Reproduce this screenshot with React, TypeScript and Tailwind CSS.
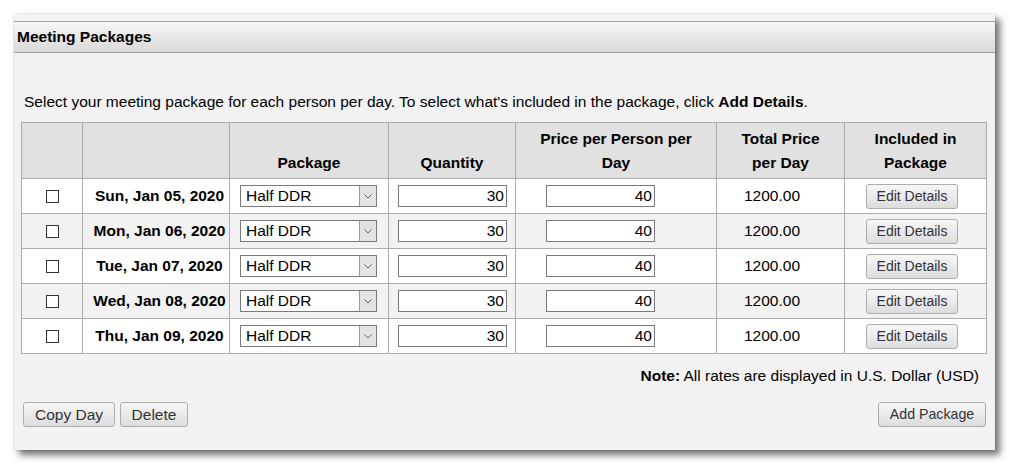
import React from "react";

const rows = [
  "Sun, Jan 05, 2020",
  "Mon, Jan 06, 2020",
  "Tue, Jan 07, 2020",
  "Wed, Jan 08, 2020",
  "Thu, Jan 09, 2020",
];

const cell = "border-r border-b border-[#acacac] flex items-center";
const hcell = "border-r border-b border-[#acacac] bg-[#e1e1e1] flex items-end justify-center text-center font-bold leading-[24px] pb-[3px]";

function Btn({ children, className = "" }: { children: React.ReactNode; className?: string }) {
  return (
    <button
      className={
        "h-[25px] rounded-[3px] border border-[#adadad] bg-gradient-to-b from-[#f7f7f7] to-[#dddddd] text-[#333] flex items-center justify-center " +
        className
      }
    >
      {children}
    </button>
  );
}

export default function App() {
  return (
    <div
      className="w-[1010px] h-[466px] bg-white pt-[14px] pl-[14px] text-black"
      style={{ fontFamily: '"Liberation Sans", Arial, sans-serif' }}
    >
      <div className="w-[981px] h-[436px] bg-[#f2f2f2] shadow-[0_0_2px_rgba(0,0,0,0.2),5px_5px_7px_rgba(0,0,0,0.55)] flex flex-col">
        <div className="h-[7px] bg-[#f4f4f4]" />
        <div className="h-[32px] border-t border-b border-[#a2a2a2] bg-gradient-to-b from-[#f7f7f7] to-[#d9d9d9] flex items-center pl-[3px]">
          <span className="text-[15.5px] font-bold">Meeting Packages</span>
        </div>
        <div className="pl-[7px] pr-[8px] flex flex-col text-[15.5px]">
          <div className="mt-[40px] pl-[3px] leading-[18px]">
            Select your meeting package for each person per day. To select what's included in the package, click{" "}
            <b>Add Details</b>.
          </div>
          <div className="mt-[11px] grid grid-cols-[61px_147px_159px_127px_201px_128px_142px] w-[966px] border-l border-t border-[#acacac]">
            <div className={hcell + " h-[56px]"}></div>
            <div className={hcell}></div>
            <div className={hcell}>Package</div>
            <div className={hcell}>Quantity</div>
            <div className={hcell}>
              Price per Person per
              <br />
              Day
            </div>
            <div className={hcell}>
              Total Price
              <br />
              per Day
            </div>
            <div className={hcell}>
              Included in
              <br />
              Package
            </div>
            {rows.map((d, i) => {
              const bg = i % 2 === 0 ? "bg-white" : "bg-[#f2f2f2]";
              return (
                <React.Fragment key={d}>
                  <div className={cell + " " + bg + " h-[35px] justify-center"}>
                    <div className="w-[13px] h-[13px] border border-[#333] bg-white" />
                  </div>
                  <div className={cell + " " + bg + " justify-center pl-[7px] font-bold whitespace-nowrap"}>{d}</div>
                  <div className={cell + " " + bg + " pl-[10px]"}>
                    <div className="w-[137px] h-[22px] border border-[#7a7a7a] bg-white flex items-stretch">
                      <span className="flex-1 pl-[5px] leading-[20px]">Half DDR</span>
                      <span className="w-[17px] border-l border-[#9a9a9a] bg-[#e3e3e3] flex items-center justify-center">
                        <svg width="8" height="5" viewBox="0 0 8 5">
                          <path d="M0.5 0.5 L4 4 L7.5 0.5" fill="none" stroke="#606060" strokeWidth="1" />
                        </svg>
                      </span>
                    </div>
                  </div>
                  <div className={cell + " " + bg + " pl-[9px]"}>
                    <div className="w-[109px] h-[22px] border border-[#7a7a7a] bg-white text-right pr-[2px] leading-[20px]">30</div>
                  </div>
                  <div className={cell + " " + bg + " pl-[30px]"}>
                    <div className="w-[109px] h-[22px] border border-[#7a7a7a] bg-white text-right pr-[2px] leading-[20px]">40</div>
                  </div>
                  <div className={cell + " " + bg + " pl-[27px]"}>1200.00</div>
                  <div className={cell + " " + bg + " pl-[21px]"}>
                    <Btn className="w-[92px] text-[14px]">Edit Details</Btn>
                  </div>
                </React.Fragment>
              );
            })}
          </div>
          <div className="mt-[13px] text-right leading-[18px] pr-[8px]">
            <b>Note:</b> All rates are displayed in U.S. Dollar (USD)
          </div>
          <div className="mt-[17px] flex items-center pl-[2px] pr-[1px]">
            <Btn className="w-[92px] text-[15.5px]">Copy Day</Btn>
            <Btn className="w-[68px] ml-[5px] text-[15.5px]">Delete</Btn>
            <Btn className="w-[108px] ml-auto text-[14.2px]">Add Package</Btn>
          </div>
        </div>
      </div>
    </div>
  );
}
